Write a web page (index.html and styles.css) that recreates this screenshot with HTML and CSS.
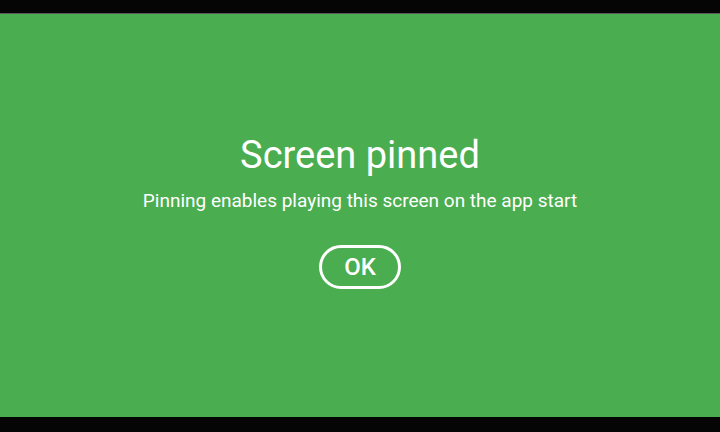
FILE: index.html
```html
<!DOCTYPE html>
<html>
<head>
<meta charset="utf-8">
<link rel="stylesheet" href="styles.css">
</head>
<body>
<div class="screen">
  <div class="bar-top"></div>
  <main class="pinned">
    <h1 class="title">Screen pinned</h1>
    <p class="subtitle">Pinning enables playing this screen on the app start</p>
    <button class="ok">OK</button>
  </main>
  <div class="bar-bottom"></div>
</div>
</body>
</html>
```
FILE: styles.css
```css
html, body {
  margin: 0;
  padding: 0;
  background: #050505;
  width: 720px;
  height: 432px;
  overflow: hidden;
}
.screen {
  display: flex;
  flex-direction: column;
  height: 432px;
}
.bar-top {
  height: 13px;
  background: #050505;
  border-bottom: 1px solid #5a5a5a;
}
.bar-bottom {
  height: 15px;
  background: #050505;
}
.pinned {
  flex: 1;
  background: #4aad4f;
  display: flex;
  flex-direction: column;
  align-items: center;
  justify-content: center;
  padding-bottom: 9px;
  font-family: Roboto, "Noto Sans", sans-serif;
  color: #ffffff;
}
.title {
  margin: 0;
  font-size: 38px;
  font-weight: 400;
  line-height: 45px;
}
.subtitle {
  margin: 10px 0 0;
  font-size: 19px;
  line-height: 25px;
}
.ok {
  margin-top: 32px;
  box-sizing: border-box;
  width: 82px;
  height: 44px;
  border: 3px solid #ffffff;
  border-radius: 22px;
  background: transparent;
  color: #ffffff;
  font-family: Roboto, "Noto Sans", sans-serif;
  font-size: 24px;
  font-weight: 500;
  display: flex;
  align-items: center;
  justify-content: center;
  padding: 0;
}
```
